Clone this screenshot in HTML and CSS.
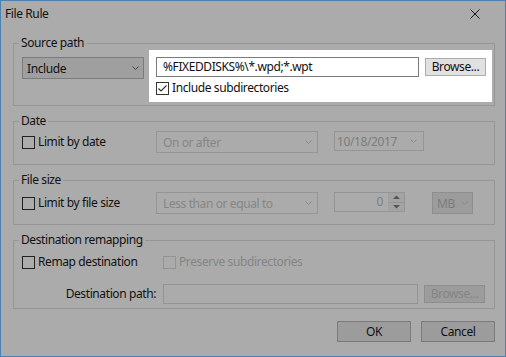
FILE: index.html
```html
<!DOCTYPE html>
<html>
<head>
<meta charset="utf-8">
<title>File Rule</title>
<link rel="stylesheet" href="styles.css">
</head>
<body>
<div class="window">
  <div class="titlebar">
    <span class="title">File Rule</span>
    <svg class="close" width="10" height="10" viewBox="0 0 10 10"><path d="M0.5 0.5L9.5 9.5M9.5 0.5L0.5 9.5" stroke="#1a1a1a" stroke-width="1" fill="none"/></svg>
  </div>
  <div class="content">
    <fieldset class="group source">
      <legend>Source path</legend>
      <div class="source-row">
        <div class="combo include">
          <span>Include</span>
          <svg class="chev" width="7" height="4" viewBox="0 0 7 4"><path d="M0.5 0.5L3.5 3.5L6.5 0.5" fill="none" stroke="#444"/></svg>
        </div>
        <div class="spot">
          <div class="spot-row">
            <div class="textbox">%FIXEDDISKS%\*.wpd;*.wpt</div>
            <div class="btn browse">Browse...</div>
          </div>
          <div class="check spot-check">
            <span class="box on"><svg width="11" height="11" viewBox="0 0 11 11"><path d="M1.5 5.5L4 8L9.5 2.5" fill="none" stroke="#333" stroke-width="1.2"/></svg></span>
            <span class="check-text">Include subdirectories</span>
          </div>
        </div>
      </div>
    </fieldset>

    <fieldset class="group date">
      <legend>Date</legend>
      <div class="opt-row">
        <div class="check opt-label">
          <span class="box"></span>
          <span class="check-text">Limit by date</span>
        </div>
        <div class="combo disabled wide">
          <span>On or after</span>
          <svg class="chev" width="7" height="4" viewBox="0 0 7 4"><path d="M0.5 0.5L3.5 3.5L6.5 0.5" fill="none" stroke="#8a8a8a"/></svg>
        </div>
        <div class="datebox">
          <span>10/18/2017</span>
          <svg class="chev" width="7" height="4" viewBox="0 0 7 4"><path d="M0.5 0.5L3.5 3.5L6.5 0.5" fill="none" stroke="#8a8a8a"/></svg>
        </div>
      </div>
    </fieldset>

    <fieldset class="group size">
      <legend>File size</legend>
      <div class="opt-row">
        <div class="check opt-label">
          <span class="box"></span>
          <span class="check-text">Limit by file size</span>
        </div>
        <div class="combo disabled wide">
          <span>Less than or equal to</span>
          <svg class="chev" width="7" height="4" viewBox="0 0 7 4"><path d="M0.5 0.5L3.5 3.5L6.5 0.5" fill="none" stroke="#8a8a8a"/></svg>
        </div>
        <div class="spin">
          <span class="spin-val">0</span>
          <div class="spin-btns">
            <span class="spin-up"><svg width="7" height="4" viewBox="0 0 7 4"><path d="M0 4L3.5 0.5L7 4Z" fill="#555"/></svg></span>
            <span class="spin-down"><svg width="7" height="4" viewBox="0 0 7 4"><path d="M0 0L3.5 3.5L7 0Z" fill="#555"/></svg></span>
          </div>
        </div>
        <div class="combo unit">
          <span>MB</span>
          <svg class="chev" width="7" height="4" viewBox="0 0 7 4"><path d="M0.5 0.5L3.5 3.5L6.5 0.5" fill="none" stroke="#8a8a8a"/></svg>
        </div>
      </div>
    </fieldset>

    <fieldset class="group dest">
      <legend>Destination remapping</legend>
      <div class="dest-row">
        <div class="check dest-label">
          <span class="box"></span>
          <span class="check-text">Remap destination</span>
        </div>
        <div class="check disabled">
          <span class="box"></span>
          <span class="check-text">Preserve subdirectories</span>
        </div>
      </div>
      <div class="path-row">
        <span class="path-label">Destination path:</span>
        <div class="textbox disabled-box"></div>
        <div class="btn disabled-btn">Browse...</div>
      </div>
    </fieldset>

    <div class="actions">
      <div class="btn action">OK</div>
      <div class="btn action">Cancel</div>
    </div>
  </div>
</div>
</body>
</html>
```

FILE: styles.css
```css
* {
  box-sizing: border-box;
}

html,
body {
  margin: 0;
  padding: 0;
}

body {
  width: 506px;
  height: 357px;
  overflow: hidden;
  background: #ababab;
  font-family: "Noto Sans", "Open Sans", sans-serif;
  font-size: 12px;
  letter-spacing: -0.4px;
  color: #111;
}

.window {
  width: 506px;
  height: 357px;
  border: 1px solid #4e7fb1;
  background: #ababab;
  display: flex;
  flex-direction: column;
}

.titlebar {
  height: 26px;
  display: flex;
  align-items: center;
  justify-content: space-between;
  padding: 0 25px 0 4px;
  flex: none;
}

.title {
  line-height: 16px;
}

.close {
  display: block;
}

.content {
  padding: 9px 10px 0 12px;
}

.group {
  margin: 0;
  padding: 0;
  border: 1px solid #969696;
  min-width: 0;
  width: 482px;
}

.group + .group {
  margin-top: 8px;
}

.group legend {
  padding: 0 2px;
  margin-left: 5px;
  line-height: 14px;
}

/* Source path */
.source-row {
  display: flex;
  align-items: flex-start;
  padding: 0 2px 3px 8px;
}

.combo {
  display: flex;
  align-items: center;
  justify-content: space-between;
  height: 22px;
  border: 1px solid #7c7c7c;
  background: #9f9f9f;
  padding: 0 4px 0 4px;
}

.combo.include {
  width: 122px;
  margin-top: 7px;
}

.chev {
  display: block;
  flex: none;
}

.spot {
  margin-left: 5px;
  width: 343px;
  height: 52px;
  background: #fff;
  padding: 7px 0 0 7px;
}

.spot-row {
  display: flex;
  align-items: flex-start;
}

.textbox {
  width: 263px;
  height: 20px;
  border: 1px solid #7a7a7a;
  background: #fff;
  padding: 0 6px;
  line-height: 18px;
  white-space: nowrap;
}

.btn {
  display: flex;
  align-items: center;
  justify-content: center;
  border: 1px solid #adadad;
  background: #e1e1e1;
  line-height: 16px;
}

.browse {
  width: 61px;
  height: 18px;
  margin: 1px 0 0 6px;
}

.check {
  display: flex;
  align-items: center;
}

.box {
  width: 13px;
  height: 13px;
  border: 1px solid #222;
  background: #acacac;
  flex: none;
  display: flex;
  align-items: center;
  justify-content: center;
}

.box.on {
  border-color: #333;
  background: #fff;
}

.box svg {
  display: block;
}

.check-text {
  margin-left: 3px;
  line-height: 16px;
}

.spot-check {
  margin-top: 3px;
}

/* Date & size rows */
.opt-row {
  display: flex;
  align-items: center;
  padding: 3px 0 0 8px;
}

.date .opt-row {
  padding-bottom: 11px;
}

.size .opt-row {
  padding-top: 5px;
  padding-bottom: 10px;
}

.opt-label {
  width: 134px;
}

.combo.disabled {
  border-color: #959595;
  background: #ababab;
  color: #868686;
}

.combo.wide {
  width: 162px;
  padding: 0 5px 0 6px;
}

.datebox {
  width: 90px;
  height: 20px;
  margin-left: 16px;
  border: 1px solid #959595;
  display: flex;
  align-items: center;
  justify-content: space-between;
  padding: 0 6px 0 2px;
  color: #7c7c7c;
  align-self: flex-start;
}

.spin {
  width: 71px;
  height: 20px;
  margin-left: 16px;
  border: 1px solid #959595;
  display: flex;
  align-self: flex-start;
}

.spin-val {
  flex: 1;
  text-align: right;
  padding-right: 5px;
  line-height: 18px;
  color: #7c7c7c;
}

.spin-btns {
  width: 16px;
  display: flex;
  flex-direction: column;
  background: #a3a3a3;
  border-left: 1px solid #a0a0a0;
}

.spin-btns span {
  flex: 1;
  display: flex;
  align-items: center;
  justify-content: center;
}

.spin-up {
  border-bottom: 1px solid #959595;
}

.spin-btns svg {
  display: block;
}

.combo.unit {
  width: 41px;
  margin-left: 27px;
  border-color: #8e8e8e;
  background: #9c9c9c;
  color: #7c7c7c;
  padding: 0 4px 0 4px;
}

/* Destination */
.dest-row {
  display: flex;
  align-items: center;
  height: 20px;
  margin-top: 5px;
  padding-left: 8px;
}

.dest-label {
  width: 141px;
}

.check.disabled .box {
  border-color: #939393;
  background: #ababab;
}

.check.disabled .check-text {
  color: #858585;
}

.path-row {
  display: flex;
  align-items: center;
  margin-top: 12px;
  padding-bottom: 4px;
}

.path-label {
  width: 142px;
  text-align: right;
  line-height: 16px;
}

.disabled-box {
  width: 255px;
  margin-left: 7px;
  border-color: #949494;
  background: #ababab;
}

.disabled-btn {
  width: 61px;
  height: 18px;
  margin-left: 6px;
  border-color: #8e8e8e;
  background: #9c9c9c;
  color: #858585;
}

.actions {
  display: flex;
  justify-content: flex-end;
  gap: 10px;
  margin-top: 12px;
}

.action {
  width: 74px;
  height: 21px;
  border-color: #7b7b7b;
  background: #9c9c9c;
}
```
